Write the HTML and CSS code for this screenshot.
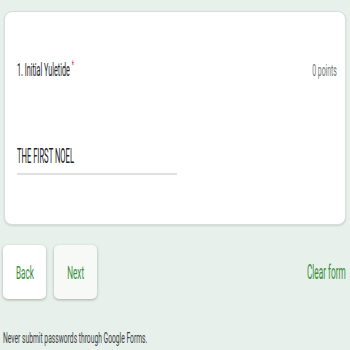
FILE: index.html
```html
<!DOCTYPE html>
<html lang="en">
<head>
<meta charset="utf-8">
<title>Form</title>
<link rel="stylesheet" href="styles.css">
</head>
<body>
<div class="page">
  <div class="card">
    <div class="qrow">
      <div class="qtitle"><span class="sq sq-title">1. Initial Yuletide<span class="req">*</span></span></div>
      <div class="points"><span class="sq sq-points">0 points</span></div>
    </div>
    <div class="answer"><span class="sq sq-answer">THE FIRST NOEL</span></div>
    <div class="underline"></div>
  </div>
  <div class="nav">
    <div class="btns">
      <button class="btn"><span class="sq sq-btn">Back</span></button>
      <button class="btn btn-next"><span class="sq sq-btn">Next</span></button>
    </div>
    <button class="clear"><span class="sq sq-clear">Clear form</span></button>
  </div>
  <p class="footer"><span class="sq sq-footer">Never submit passwords through Google Forms.</span></p>
</div>
</body>
</html>
```
FILE: styles.css
```css
html, body {
  margin: 0;
  padding: 0;
  background: #e7f0ea;
  font-family: Roboto, "Liberation Sans", sans-serif;
  overflow: hidden;
}
.page {
  width: 350px;
  height: 350px;
  box-sizing: border-box;
  padding: 11px 3px 0 3px;
}
.card {
  margin: 0 1px;
  height: 214px;
  box-sizing: border-box;
  background: #fff;
  border: 1px solid #dadce0;
  border-radius: 8px;
  box-shadow: 0 1px 2px rgba(0,0,0,0.12);
  padding: 48px 8px 0 12px;
}
.sq {
  display: inline-block;
  white-space: nowrap;
  transform-origin: left center;
}
.qrow {
  display: flex;
  justify-content: space-between;
  align-items: baseline;
}
.qtitle {
  font-size: 19px;
  line-height: 20px;
  color: #202124;
}
.sq-title { transform: scaleX(0.38); }
.req {
  color: #d93025;
  font-size: 13px;
  line-height: 10px;
  vertical-align: top;
  margin-left: 5px;
}
.points {
  font-size: 17px;
  line-height: 20px;
  color: #70757a;
}
.sq-points { transform: scaleX(0.405); transform-origin: right center; }
.answer {
  margin-top: 64px;
  font-size: 21px;
  line-height: 24px;
  color: #202124;
}
.sq-answer { transform: scaleX(0.362); }
.underline {
  margin-top: 5px;
  width: 160px;
  height: 2px;
  background: #e0e0e0;
}
.nav {
  margin-top: 20px;
  display: flex;
  justify-content: space-between;
  align-items: center;
}
.btns {
  display: flex;
  gap: 8px;
}
.btn {
  width: 43px;
  height: 54px;
  padding: 0;
  border: none;
  border-radius: 5px;
  background: #fff;
  box-shadow: 0 1px 3px rgba(0,0,0,0.28);
  color: #388e3c;
  font-family: Roboto, "Liberation Sans", sans-serif;
  font-size: 19px;
  display: flex;
  align-items: center;
  justify-content: center;
}
.btn-next { background: #f7f9f7; }
.sq-btn { transform: scaleX(0.43); transform-origin: center center; }
.clear {
  border: none;
  background: none;
  padding: 0 1px 0 0;
  color: #388e3c;
  font-family: Roboto, "Liberation Sans", sans-serif;
  font-size: 20px;
  line-height: 22px;
}
.sq-clear { transform: scaleX(0.414); transform-origin: right center; }
.footer {
  margin: 31px 0 0 0;
  font-size: 15px;
  line-height: 16px;
  color: #3c4043;
}
.sq-footer { transform: scaleX(0.448); }
```
